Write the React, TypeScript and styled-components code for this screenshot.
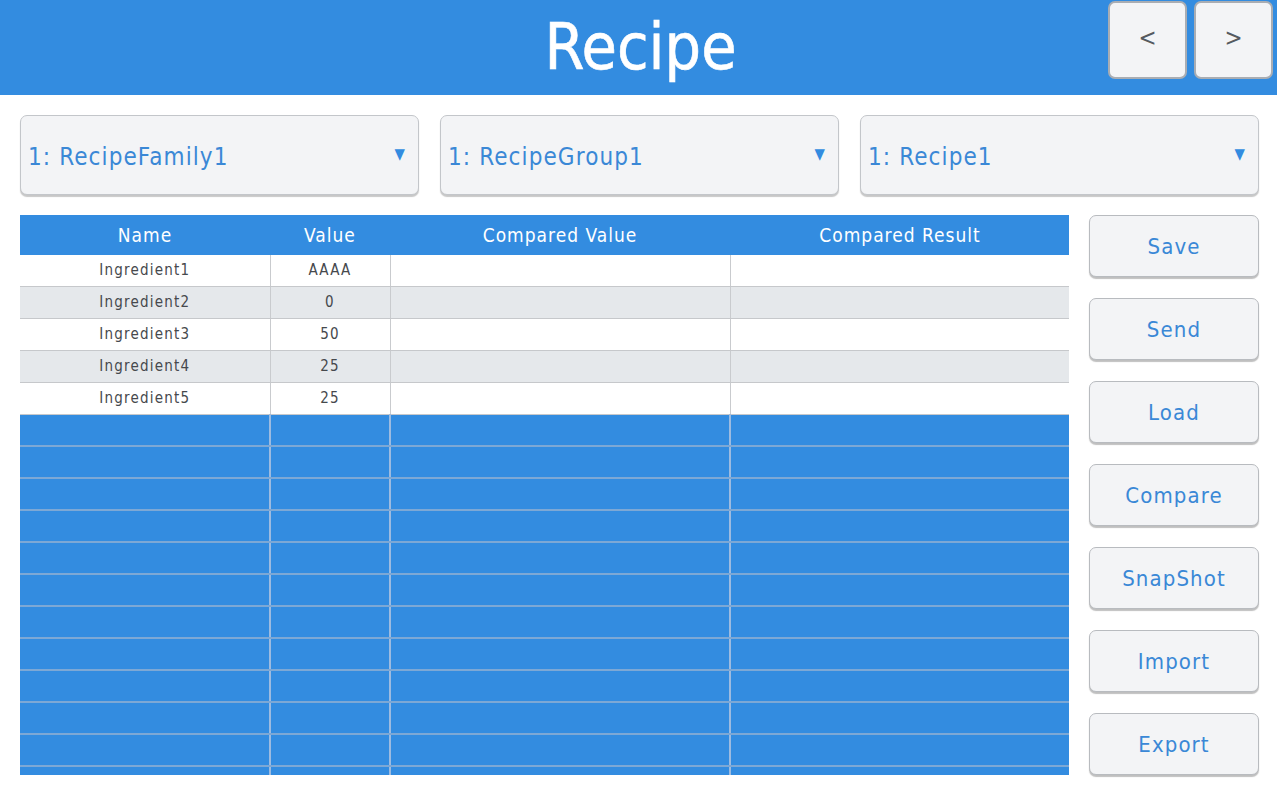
import React from "react"
import styled, { createGlobalStyle } from "styled-components"

const BLUE = "#338ce0"
const FONT = `"DejaVu Sans Condensed", "DejaVu Sans", Verdana, sans-serif`

const GlobalStyle = createGlobalStyle`
  html, body {
    margin: 0;
    padding: 0;
    background: #ffffff;
  }
  body {
    font-family: ${FONT};
    font-stretch: condensed;
  }
`

const Page = styled.div`
  width: 1277px;
  height: 790px;
  overflow: hidden;
  background: #ffffff;
`

const Header = styled.header`
  height: 95px;
  background: ${BLUE};
  display: grid;
  grid-template-columns: 1fr auto 1fr;
  align-items: center;
`

const Title = styled.h1`
  grid-column: 2;
  margin: 0;
  color: #ffffff;
  font-size: 64px;
  font-weight: normal;
  line-height: 1;
  padding: 0 0 2px 4px;
  -webkit-text-stroke: 0.6px #ffffff;
`

const NavGroup = styled.div`
  grid-column: 3;
  justify-self: end;
  align-self: start;
  display: flex;
  gap: 7px;
  padding: 1px 4px 0 0;
`

const NavButton = styled.button`
  width: 79px;
  height: 78px;
  border: 2px solid #a9adb3;
  border-radius: 7px;
  background: #f3f4f6;
  color: #555a60;
  font-family: ${FONT};
  font-size: 24px;
  padding: 0 0 4px;
`

const Content = styled.main`
  padding: 20px 18px 0 20px;
  display: flex;
  flex-direction: column;
  gap: 20px;
`

const SelectRow = styled.div`
  display: grid;
  grid-template-columns: repeat(3, 399px);
  gap: 21px;
`

const Select = styled.div`
  height: 80px;
  box-sizing: border-box;
  border: 1px solid #c3c6ca;
  border-radius: 7px;
  background: #f3f4f6;
  box-shadow: 0 2px 1px rgba(0, 0, 0, 0.22);
  display: flex;
  align-items: center;
  justify-content: space-between;
  padding: 3px 12px 0 7px;
  color: #3a88d6;
  font-size: 24px;
  letter-spacing: 1.1px;
`

const Arrow = styled.span`
  font-size: 15px;
  color: ${BLUE};
  padding-bottom: 6px;
`

const Body = styled.div`
  display: flex;
  gap: 20px;
`

const TableBox = styled.div`
  width: 1050px;
  height: 560px;
  overflow: hidden;
  background: ${BLUE};
`

const Grid = styled.table`
  width: 100%;
  border-collapse: collapse;
  table-layout: fixed;
`

const Th = styled.th`
  height: 40px;
  padding: 0;
  background: ${BLUE};
  color: #ffffff;
  font-size: 19px;
  font-weight: normal;
  letter-spacing: 1px;
  text-align: center;
  line-height: 36px;
`

const Tr = styled.tr<{ $kind: "white" | "grey" | "empty" }>`
  background: ${p => (p.$kind === "white" ? "#ffffff" : p.$kind === "grey" ? "#e5e8eb" : BLUE)};
  td {
    height: ${p => (p.$kind === "empty" ? "30px" : "31px")};
    border-right: ${p => (p.$kind === "empty" ? "2px solid #9dbbe0" : "1px solid #c9cbce")};
    border-bottom: ${p => (p.$kind === "empty" ? "2px solid #7da8d5" : "1px solid #c6c8cb")};
  }
`

const Td = styled.td`
  padding: 0;
  color: #46494d;
  font-size: 15px;
  letter-spacing: 1.2px;
  line-height: 29px;
  text-align: center;
  &:last-child {
    border-right: none;
  }
`

const Side = styled.div`
  display: flex;
  flex-direction: column;
  gap: 21px;
`

const ActionButton = styled.button`
  width: 170px;
  height: 62px;
  box-sizing: border-box;
  border: 1px solid #b8bbbf;
  border-radius: 7px;
  background: #f3f4f6;
  box-shadow: 0 2px 1px rgba(0, 0, 0, 0.25);
  color: #3a88d6;
  font-family: ${FONT};
  font-stretch: condensed;
  font-size: 22px;
  letter-spacing: 1.1px;
  padding: 0;
`

const rows = [
  ["Ingredient1", "AAAA"],
  ["Ingredient2", "0"],
  ["Ingredient3", "50"],
  ["Ingredient4", "25"],
  ["Ingredient5", "25"],
]

const actions = ["Save", "Send", "Load", "Compare", "SnapShot", "Import", "Export"]

export default function App() {
  return (
    <Page>
      <GlobalStyle />
      <Header>
        <Title>Recipe</Title>
        <NavGroup>
          <NavButton>&lt;</NavButton>
          <NavButton>&gt;</NavButton>
        </NavGroup>
      </Header>
      <Content>
        <SelectRow>
          {["1: RecipeFamily1", "1: RecipeGroup1", "1: Recipe1"].map(label => (
            <Select key={label}>
              <span>{label}</span>
              <Arrow>▼</Arrow>
            </Select>
          ))}
        </SelectRow>
        <Body>
          <TableBox>
            <Grid>
              <colgroup>
                <col style={{ width: 250 }} />
                <col style={{ width: 120 }} />
                <col style={{ width: 340 }} />
                <col style={{ width: 340 }} />
              </colgroup>
              <thead>
                <tr>
                  <Th>Name</Th>
                  <Th>Value</Th>
                  <Th>Compared Value</Th>
                  <Th>Compared Result</Th>
                </tr>
              </thead>
              <tbody>
                {rows.map(([name, value], i) => (
                  <Tr key={name} $kind={i % 2 === 0 ? "white" : "grey"}>
                    <Td>{name}</Td>
                    <Td>{value}</Td>
                    <Td />
                    <Td />
                  </Tr>
                ))}
                {Array.from({ length: 12 }).map((_, i) => (
                  <Tr key={`e${i}`} $kind="empty">
                    <Td />
                    <Td />
                    <Td />
                    <Td />
                  </Tr>
                ))}
              </tbody>
            </Grid>
          </TableBox>
          <Side>
            {actions.map(a => (
              <ActionButton key={a}>{a}</ActionButton>
            ))}
          </Side>
        </Body>
      </Content>
    </Page>
  )
}
